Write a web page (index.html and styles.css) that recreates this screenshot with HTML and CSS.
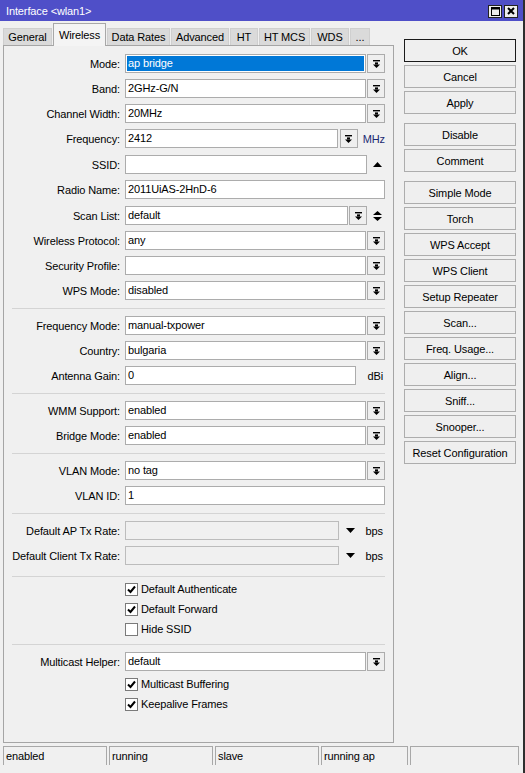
FILE: index.html
```html
<!DOCTYPE html>
<html>
<head>
<meta charset="utf-8">
<link rel="stylesheet" href="styles.css">
</head>
<body>
<div class="window">
  <div class="titlebar">
    <span class="title">Interface &lt;wlan1&gt;</span>
    <div class="tb-buttons">
      <span class="tb-btn"><svg width="9" height="9" viewBox="0 0 9 9"><rect x="0.5" y="0.5" width="8" height="8" fill="none" stroke="#000" stroke-width="1"/><rect x="0" y="0" width="9" height="2.5" fill="#000"/></svg></span>
      <span class="tb-btn"><svg width="8" height="8" viewBox="0 0 8 8"><path d="M1 1 L7 7 M7 1 L1 7" stroke="#000" stroke-width="2"/></svg></span>
    </div>
  </div>
  <div class="main">
    <div class="left">
      <div class="tabs">
        <span class="tab t-general">General</span>
        <span class="tab active t-wireless">Wireless</span>
        <span class="tab t-datarates">Data Rates</span>
        <span class="tab t-advanced">Advanced</span>
        <span class="tab t-ht">HT</span>
        <span class="tab t-htmcs">HT MCS</span>
        <span class="tab t-wds">WDS</span>
        <span class="tab t-more">...</span>
      </div>
      <div class="panel">
        <div class="row"><label class="lbl">Mode:</label><div class="field"><div class="inp w-dd selected">ap bridge</div><span class="dd"><svg width="7" height="8" viewBox="0 0 7 8"><rect x="0" y="0" width="7" height="1.4"/><rect x="2" y="2.4" width="3" height="2.1"/><polygon points="0,4.5 7,4.5 3.5,8"/></svg></span></div></div>
        <div class="row"><label class="lbl">Band:</label><div class="field"><div class="inp w-dd">2GHz-G/N</div><span class="dd"><svg width="7" height="8" viewBox="0 0 7 8"><rect x="0" y="0" width="7" height="1.4"/><rect x="2" y="2.4" width="3" height="2.1"/><polygon points="0,4.5 7,4.5 3.5,8"/></svg></span></div></div>
        <div class="row"><label class="lbl">Channel Width:</label><div class="field"><div class="inp w-dd">20MHz</div><span class="dd"><svg width="7" height="8" viewBox="0 0 7 8"><rect x="0" y="0" width="7" height="1.4"/><rect x="2" y="2.4" width="3" height="2.1"/><polygon points="0,4.5 7,4.5 3.5,8"/></svg></span></div></div>
        <div class="row"><label class="lbl">Frequency:</label><div class="field"><div class="inp w-freq">2412</div><span class="dd dd-gap"><svg width="7" height="8" viewBox="0 0 7 8"><rect x="0" y="0" width="7" height="1.4"/><rect x="2" y="2.4" width="3" height="2.1"/><polygon points="0,4.5 7,4.5 3.5,8"/></svg></span><span class="unit blue">MHz</span></div></div>
        <div class="row tall"><label class="lbl">SSID:</label><div class="field"><div class="inp w-ssid"></div><span class="arrow"><svg width="9" height="5" viewBox="0 0 9 5"><polygon points="0,5 9,5 4.5,0"/></svg></span></div></div>
        <div class="row"><label class="lbl">Radio Name:</label><div class="field"><div class="inp w-full">2011UiAS-2HnD-6</div></div></div>
        <div class="row tall"><label class="lbl">Scan List:</label><div class="field"><div class="inp w-scan">default</div><span class="dd"><svg width="7" height="8" viewBox="0 0 7 8"><rect x="0" y="0" width="7" height="1.4"/><rect x="2" y="2.4" width="3" height="2.1"/><polygon points="0,4.5 7,4.5 3.5,8"/></svg></span><span class="arrow"><svg width="9" height="10" viewBox="0 0 9 10"><polygon points="0,4 9,4 4.5,0"/><polygon points="0,6 9,6 4.5,10"/></svg></span></div></div>
        <div class="row"><label class="lbl">Wireless Protocol:</label><div class="field"><div class="inp w-dd">any</div><span class="dd"><svg width="7" height="8" viewBox="0 0 7 8"><rect x="0" y="0" width="7" height="1.4"/><rect x="2" y="2.4" width="3" height="2.1"/><polygon points="0,4.5 7,4.5 3.5,8"/></svg></span></div></div>
        <div class="row"><label class="lbl">Security Profile:</label><div class="field"><div class="inp w-dd"></div><span class="dd"><svg width="7" height="8" viewBox="0 0 7 8"><rect x="0" y="0" width="7" height="1.4"/><rect x="2" y="2.4" width="3" height="2.1"/><polygon points="0,4.5 7,4.5 3.5,8"/></svg></span></div></div>
        <div class="row"><label class="lbl">WPS Mode:</label><div class="field"><div class="inp w-dd">disabled</div><span class="dd"><svg width="7" height="8" viewBox="0 0 7 8"><rect x="0" y="0" width="7" height="1.4"/><rect x="2" y="2.4" width="3" height="2.1"/><polygon points="0,4.5 7,4.5 3.5,8"/></svg></span></div></div>

        <div class="sep"></div>

        <div class="row"><label class="lbl">Frequency Mode:</label><div class="field"><div class="inp w-dd">manual-txpower</div><span class="dd"><svg width="7" height="8" viewBox="0 0 7 8"><rect x="0" y="0" width="7" height="1.4"/><rect x="2" y="2.4" width="3" height="2.1"/><polygon points="0,4.5 7,4.5 3.5,8"/></svg></span></div></div>
        <div class="row"><label class="lbl">Country:</label><div class="field"><div class="inp w-dd">bulgaria</div><span class="dd"><svg width="7" height="8" viewBox="0 0 7 8"><rect x="0" y="0" width="7" height="1.4"/><rect x="2" y="2.4" width="3" height="2.1"/><polygon points="0,4.5 7,4.5 3.5,8"/></svg></span></div></div>
        <div class="row"><label class="lbl">Antenna Gain:</label><div class="field"><div class="inp w-gain">0</div><span class="unit right">dBi</span></div></div>

        <div class="sep"></div>

        <div class="row"><label class="lbl">WMM Support:</label><div class="field"><div class="inp w-dd">enabled</div><span class="dd"><svg width="7" height="8" viewBox="0 0 7 8"><rect x="0" y="0" width="7" height="1.4"/><rect x="2" y="2.4" width="3" height="2.1"/><polygon points="0,4.5 7,4.5 3.5,8"/></svg></span></div></div>
        <div class="row"><label class="lbl">Bridge Mode:</label><div class="field"><div class="inp w-dd">enabled</div><span class="dd"><svg width="7" height="8" viewBox="0 0 7 8"><rect x="0" y="0" width="7" height="1.4"/><rect x="2" y="2.4" width="3" height="2.1"/><polygon points="0,4.5 7,4.5 3.5,8"/></svg></span></div></div>

        <div class="sep"></div>

        <div class="row"><label class="lbl">VLAN Mode:</label><div class="field"><div class="inp w-dd">no tag</div><span class="dd"><svg width="7" height="8" viewBox="0 0 7 8"><rect x="0" y="0" width="7" height="1.4"/><rect x="2" y="2.4" width="3" height="2.1"/><polygon points="0,4.5 7,4.5 3.5,8"/></svg></span></div></div>
        <div class="row"><label class="lbl">VLAN ID:</label><div class="field"><div class="inp w-full">1</div></div></div>

        <div class="sep"></div>

        <div class="row"><label class="lbl">Default AP Tx Rate:</label><div class="field"><div class="inp w-rate disabled"></div><span class="tri"><svg width="9" height="5" viewBox="0 0 9 5"><polygon points="0,0 9,0 4.5,5"/></svg></span><span class="unit right">bps</span></div></div>
        <div class="row"><label class="lbl">Default Client Tx Rate:</label><div class="field"><div class="inp w-rate disabled"></div><span class="tri"><svg width="9" height="5" viewBox="0 0 9 5"><polygon points="0,0 9,0 4.5,5"/></svg></span><span class="unit right">bps</span></div></div>

        <div class="sep sep-cb"></div>

        <div class="cbrow"><span class="cb"><svg width="11" height="11" viewBox="0 0 11 11"><path d="M2 5.5 L4.5 8 L9 2.5" fill="none" stroke="#000" stroke-width="2"/></svg></span><span class="cbtext">Default Authenticate</span></div>
        <div class="cbrow"><span class="cb"><svg width="11" height="11" viewBox="0 0 11 11"><path d="M2 5.5 L4.5 8 L9 2.5" fill="none" stroke="#000" stroke-width="2"/></svg></span><span class="cbtext">Default Forward</span></div>
        <div class="cbrow"><span class="cb"></span><span class="cbtext">Hide SSID</span></div>

        <div class="sep sep-after-cb"></div>

        <div class="row"><label class="lbl">Multicast Helper:</label><div class="field"><div class="inp w-dd">default</div><span class="dd"><svg width="7" height="8" viewBox="0 0 7 8"><rect x="0" y="0" width="7" height="1.4"/><rect x="2" y="2.4" width="3" height="2.1"/><polygon points="0,4.5 7,4.5 3.5,8"/></svg></span></div></div>
        <div class="cbrow"><span class="cb"><svg width="11" height="11" viewBox="0 0 11 11"><path d="M2 5.5 L4.5 8 L9 2.5" fill="none" stroke="#000" stroke-width="2"/></svg></span><span class="cbtext">Multicast Buffering</span></div>
        <div class="cbrow"><span class="cb"><svg width="11" height="11" viewBox="0 0 11 11"><path d="M2 5.5 L4.5 8 L9 2.5" fill="none" stroke="#000" stroke-width="2"/></svg></span><span class="cbtext">Keepalive Frames</span></div>
      </div>
    </div>
    <div class="buttons">
      <div class="btn default">OK</div>
      <div class="btn">Cancel</div>
      <div class="btn">Apply</div>
      <div class="btn group">Disable</div>
      <div class="btn">Comment</div>
      <div class="btn group">Simple Mode</div>
      <div class="btn">Torch</div>
      <div class="btn">WPS Accept</div>
      <div class="btn">WPS Client</div>
      <div class="btn">Setup Repeater</div>
      <div class="btn">Scan...</div>
      <div class="btn">Freq. Usage...</div>
      <div class="btn">Align...</div>
      <div class="btn">Sniff...</div>
      <div class="btn">Snooper...</div>
      <div class="btn">Reset Configuration</div>
    </div>
  </div>
  <div class="statusbar">
    <span class="cell c1">enabled</span>
    <span class="cell c2">running</span>
    <span class="cell c3">slave</span>
    <span class="cell c4">running ap</span>
    <span class="cell c5"></span>
  </div>
</div>
</body>
</html>
```

FILE: styles.css
```css
* { box-sizing: border-box; }
html, body {
  margin: 0;
  padding: 0;
  background: #f0f0f0;
}
body {
  font-family: "Liberation Sans", Arial, sans-serif;
  font-size: 11px;
  letter-spacing: -0.12px;
  color: #000;
}
.window {
  width: 525px;
  height: 773px;
  background: #f0f0f0;
  position: relative;
  border-right: 2px solid #2e2e2e;
}
.titlebar {
  height: 21px;
  background: #4f4fc8;
  display: flex;
  align-items: center;
  justify-content: space-between;
  padding: 0 5px 0 6px;
}
.title {
  color: #fff;
  font-size: 11px;
  line-height: 21px;
  padding-top: 1px;
}
.tb-buttons {
  display: flex;
  gap: 2px;
  padding-top: 1px;
}
.tb-btn {
  width: 14px;
  height: 13px;
  background: #eeeeee;
  border: 1px solid #222;
  display: flex;
  align-items: center;
  justify-content: center;
}
.main {
  display: flex;
  align-items: flex-start;
}
.left {
  margin-left: 3px;
  width: 391px;
}
.tabs {
  height: 24px;
  display: flex;
  align-items: flex-end;
  gap: 1px;
  position: relative;
  z-index: 2;
}
.tab {
  height: 17px;
  background: #dadada;
  border: 1px solid #cfcfcf;
  border-bottom: none;
  display: flex;
  align-items: center;
  justify-content: center;
  font-size: 11px;
  color: #000;
}
.tab.active {
  height: 23px;
  margin-bottom: -1px;
  background: #f4f4f4;
  border: 1px solid #a8a8a8;
  border-bottom: none;
  align-items: flex-start;
  padding-top: 5px;
}
.t-general { width: 49px; }
.t-wireless { width: 53px; }
.t-datarates { width: 63px; }
.t-advanced { width: 58px; }
.t-ht { width: 28px; }
.t-htmcs { width: 51px; }
.t-wds { width: 38px; }
.t-more { width: 20px; }
.panel {
  height: 698px;
  border: 1px solid #a5a5a5;
  background: #f0f0f0;
  padding-top: 5px;
}
.row {
  height: 25px;
  display: flex;
  align-items: center;
}
.row.tall { margin-top: 1px; }
.lbl {
  width: 116px;
  text-align: right;
  margin-right: 5px;
  white-space: nowrap;
}
.field {
  width: 260px;
  display: flex;
  align-items: center;
}
.inp {
  height: 19px;
  background: #fff;
  border: 1px solid #acacac;
  padding-left: 2px;
  line-height: 17px;
  white-space: nowrap;
  overflow: hidden;
}
.inp.selected {
  background: #0078d7;
  color: #fff;
  box-shadow: inset 0 0 0 1px #fff;
}
.inp.disabled {
  background: #f0f0f0;
  border-color: #bcbcbc;
}
.w-dd { width: 241px; margin-right: 1px; }
.w-full { width: 260px; }
.w-freq { width: 213px; margin-right: 1px; }
.w-ssid { width: 242px; }
.w-scan { width: 223px; margin-right: 1px; }
.w-gain { width: 231px; }
.w-rate { width: 214px; }
.dd {
  width: 18px;
  height: 19px;
  border: 1px solid #acacac;
  background: #efefef;
  display: flex;
  align-items: center;
  justify-content: center;
}
.dd.dd-gap { margin-left: 1px; }
.arrow {
  width: 18px;
  display: flex;
  justify-content: center;
  padding-left: 2px;
}
.tri {
  width: 20px;
  display: flex;
  justify-content: center;
  padding-left: 3px;
}
.unit {
  margin-left: 5px;
}
.unit.blue { color: #1c2a72; }
.unit.right {
  margin-left: auto;
  margin-right: 2px;
}
.sep {
  height: 1px;
  background: #d4d4d4;
  margin: 5px 8px 4px 8px;
}
.sep.sep-cb { margin: 8px 8px 2px 8px; }
.sep.sep-after-cb { margin: 5px 8px 4px 8px; }
.cbrow {
  height: 20px;
  display: flex;
  align-items: center;
  padding-left: 121px;
}
.cb {
  width: 13px;
  height: 13px;
  border: 1px solid #7a7a7a;
  background: #fff;
  display: flex;
  align-items: center;
  justify-content: center;
  margin-right: 3px;
}
.buttons {
  margin-left: 10px;
  padding-top: 18px;
  width: 112px;
  display: flex;
  flex-direction: column;
  gap: 3px;
}
.btn {
  height: 23px;
  border: 1px solid #adadad;
  background: #efefef;
  display: flex;
  align-items: center;
  justify-content: center;
  white-space: nowrap;
}
.btn.default {
  border: 1px solid #1a1a1a;
}
.btn.group { margin-top: 6px; }
.statusbar {
  display: flex;
  gap: 2px;
  margin-top: 3px;
  padding-left: 3px;
}
.cell {
  height: 19px;
  border: 1px solid #a8a8a8;
  border-bottom: none;
  padding-left: 2px;
  line-height: 18px;
}
.c1 { width: 104px; }
.c2 { width: 104px; }
.c3 { width: 104px; }
.c4 { width: 87px; }
.c5 { width: 109px; }
```
